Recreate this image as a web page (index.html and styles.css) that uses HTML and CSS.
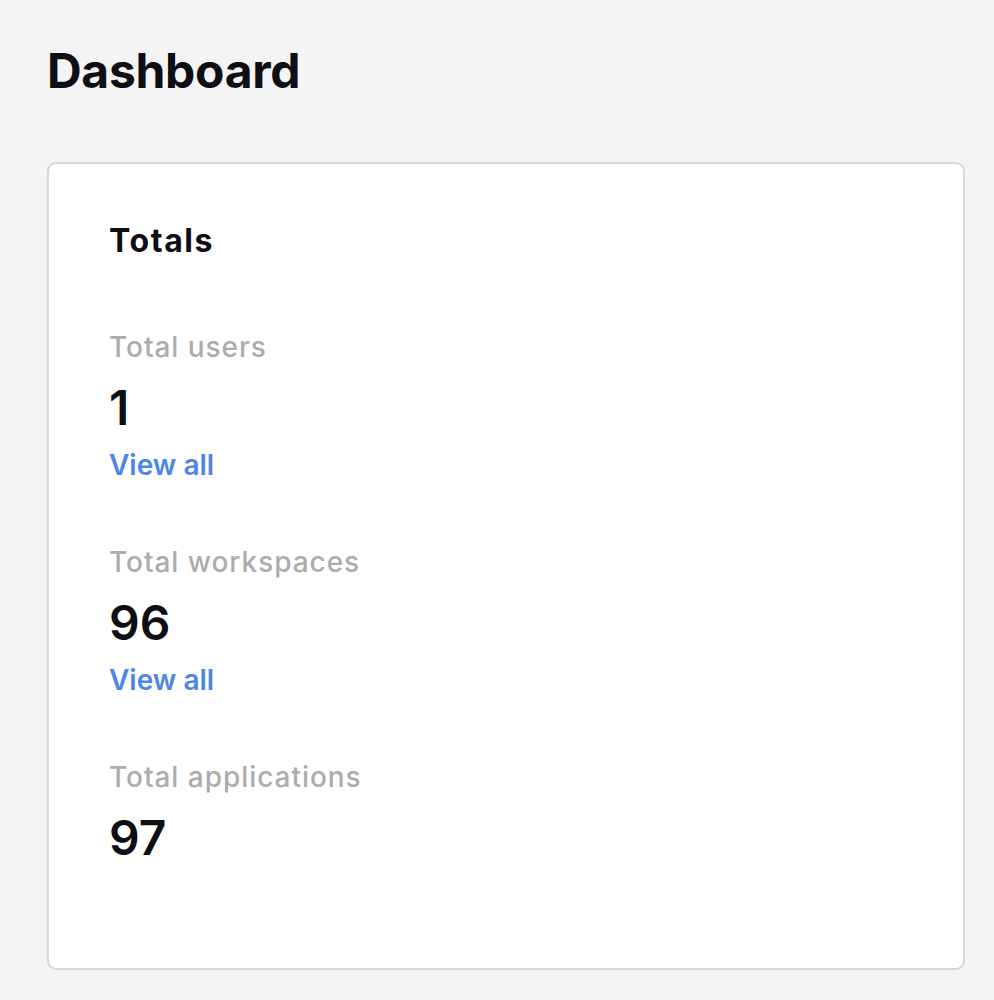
FILE: index.html
```html
<!DOCTYPE html>
<html lang="en">
<head>
<meta charset="utf-8">
<title>Dashboard</title>
<link rel="stylesheet" href="styles.css">
</head>
<body>
<main class="page">
  <h1 class="page-title">Dashboard</h1>
  <section class="card">
    <h2 class="card-title">Totals</h2>
    <div class="stats">
      <div class="stat">
        <div class="stat-label">Total users</div>
        <div class="stat-value">1</div>
        <a class="stat-link" href="#">View all</a>
      </div>
      <div class="stat">
        <div class="stat-label">Total workspaces</div>
        <div class="stat-value">96</div>
        <a class="stat-link" href="#">View all</a>
      </div>
      <div class="stat">
        <div class="stat-label">Total applications</div>
        <div class="stat-value">97</div>
      </div>
    </div>
  </section>
</main>
</body>
</html>
```

FILE: styles.css
```css
html, body {
  margin: 0;
  padding: 0;
  background: #f4f4f4;
}

body {
  font-family: Inter, "Noto Sans", "Liberation Sans", sans-serif;
  color: #0e0e14;
}

.page {
  padding: 42px 29px 0 47px;
}

.page-title {
  margin: 0;
  font-size: 48px;
  line-height: 58px;
  font-weight: 700;
  letter-spacing: -0.3px;
}

.card {
  margin-top: 62px;
  background: #ffffff;
  border: 2px solid #d8d8d8;
  border-radius: 9px;
  padding: 59px 60px 101px 60px;
}

.card-title {
  margin: 0;
  font-size: 32px;
  line-height: 36px;
  font-weight: 700;
  letter-spacing: 1.6px;
}

.stats {
  display: flex;
  flex-direction: column;
  gap: 63px;
  margin-top: 71px;
}

.stat {
  display: flex;
  flex-direction: column;
  align-items: flex-start;
}

.stat-label {
  font-size: 28px;
  line-height: 34px;
  font-weight: 500;
  letter-spacing: 0.95px;
  color: #acacac;
}

.stat-value {
  margin-top: 15px;
  font-size: 48px;
  line-height: 58px;
  font-weight: 600;
}

.stat-link {
  margin-top: 11px;
  font-size: 28px;
  line-height: 34px;
  font-weight: 600;
  color: #4d86e8;
  text-decoration: none;
}
```
